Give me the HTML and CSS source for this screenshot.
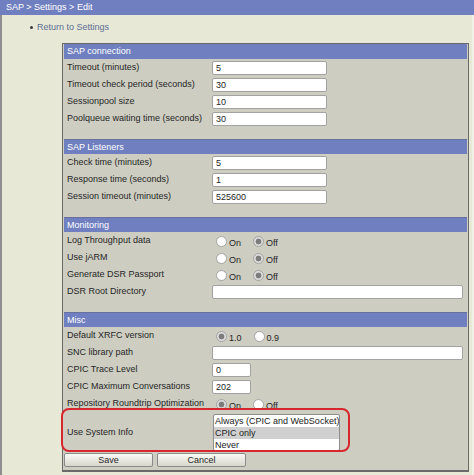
FILE: index.html
```html
<!DOCTYPE html>
<html lang="en">
<head>
<meta charset="utf-8">
<title>SAP &gt; Settings &gt; Edit</title>
<link rel="stylesheet" href="styles.css">
</head>
<body>
<div class="topbar">SAP &gt; Settings &gt; Edit</div>
<div class="page">
  <ul class="nav">
    <li><a href="#">Return to Settings</a></li>
  </ul>
  <form class="panel">
    <div class="sec">SAP connection</div>
    <div class="row"><span class="lbl">Timeout (minutes)</span><input class="txt" type="text" value="5"></div>
    <div class="row"><span class="lbl">Timeout check period (seconds)</span><input class="txt" type="text" value="30"></div>
    <div class="row"><span class="lbl">Sessionpool size</span><input class="txt" type="text" value="10"></div>
    <div class="row"><span class="lbl">Poolqueue waiting time (seconds)</span><input class="txt" type="text" value="30"></div>
    <div class="gap"></div>

    <div class="sec">SAP Listeners</div>
    <div class="row"><span class="lbl">Check time (minutes)</span><input class="txt" type="text" value="5"></div>
    <div class="row"><span class="lbl">Response time (seconds)</span><input class="txt" type="text" value="1"></div>
    <div class="row"><span class="lbl">Session timeout (minutes)</span><input class="txt" type="text" value="525600"></div>
    <div class="gap"></div>

    <div class="sec">Monitoring</div>
    <div class="row"><span class="lbl">Log Throughput data</span>
      <div class="radios"><label class="opt"><input type="radio" name="log"><span>On</span></label><label class="opt"><input type="radio" name="log" checked><span>Off</span></label></div></div>
    <div class="row"><span class="lbl">Use jARM</span>
      <div class="radios"><label class="opt"><input type="radio" name="jarm"><span>On</span></label><label class="opt"><input type="radio" name="jarm" checked><span>Off</span></label></div></div>
    <div class="row"><span class="lbl">Generate DSR Passport</span>
      <div class="radios"><label class="opt"><input type="radio" name="dsr"><span>On</span></label><label class="opt"><input type="radio" name="dsr" checked><span>Off</span></label></div></div>
    <div class="row"><span class="lbl">DSR Root Directory</span><input class="txt wide" type="text" value=""></div>
    <div class="gap"></div>

    <div class="sec">Misc</div>
    <div class="row"><span class="lbl">Default XRFC version</span>
      <div class="radios"><label class="opt"><input type="radio" name="xrfc" checked><span>1.0</span></label><label class="opt"><input type="radio" name="xrfc"><span>0.9</span></label></div></div>
    <div class="row"><span class="lbl">SNC library path</span><input class="txt wide" type="text" value=""></div>
    <div class="row"><span class="lbl">CPIC Trace Level</span><input class="txt small" type="text" value="0"></div>
    <div class="row"><span class="lbl">CPIC Maximum Conversations</span><input class="txt small" type="text" value="202"></div>
    <div class="row"><span class="lbl">Repository Roundtrip Optimization</span>
      <div class="radios"><label class="opt"><input type="radio" name="rro" checked><span>On</span></label><label class="opt"><input type="radio" name="rro"><span>Off</span></label></div></div>
    <div class="row tall"><span class="lbl">Use System Info</span>
      <div class="listbox" role="listbox">
        <div class="item" role="option">Always (CPIC and WebSocket)</div>
        <div class="item sel" role="option" aria-selected="true">CPIC only</div>
        <div class="item" role="option">Never</div>
      </div>
      <div class="mark"></div>
    </div>
    <div class="btns">
      <button type="button" class="btn">Save</button>
      <button type="button" class="btn">Cancel</button>
    </div>
  </form>
</div>
</body>
</html>
```
FILE: styles.css
```css
* { box-sizing: border-box; }
html, body { margin: 0; padding: 0; }
body {
  font-family: "Liberation Sans", Arial, sans-serif;
  font-size: 9px;
  color: #262626;
  background: #e8e8d7;
  height: 475px;
  overflow: hidden;
}
.topbar {
  height: 15px;
  line-height: 15px;
  background: #6f7fbf;
  color: #ffffff;
  padding-left: 6px;
}
.page {
  border-left: 2px solid #8e8e8e;
  border-right: 2px solid #f1f1e6;
  height: 460px;
}
.nav {
  list-style: none;
  margin: 0;
  padding: 7px 0 0 28px;
  line-height: 11px;
  height: 28px;
}
.nav li { display: flex; align-items: center; gap: 4px; }
.nav li::before {
  content: "";
  width: 3px;
  height: 3px;
  border-radius: 50%;
  background: #3a3a3a;
}
.nav a { color: #5a6f92; text-decoration: none; }
.panel {
  margin: 0 0 0 60px;
  width: 407px;
  background: #cdcdc1;
  border: 1px solid #6a6a6a;
  border-bottom-width: 2px;
  padding: 0 1px 2px 1px;
}
.sec {
  height: 15px;
  line-height: 15px;
  background: #6f7fbf;
  color: #ffffff;
  padding-left: 3px;
  border-top: 1px solid #66719f;
}
.sec:first-child { border-top: 0; }
.gap { height: 12px; }
.row {
  display: grid;
  grid-template-columns: 148px 1fr;
  align-items: center;
  height: 17px;
}
.lbl { padding-left: 3px; line-height: 17px; white-space: nowrap; }
.txt {
  margin: 1px 0 0 0;
  width: 115px;
  height: 14px;
  border: 1px solid #a2a2a2;
  border-radius: 2px;
  background: #ffffff;
  font: 9px "Liberation Sans", Arial, sans-serif;
  color: #262626;
  padding: 0 0 0 3px;
  outline: none;
}
.txt.wide { width: 251px; }
.txt.small { width: 39px; }
.radios { display: flex; align-items: center; margin-top: 2px; }
.opt { display: flex; align-items: center; margin-right: 8px; }
.opt input {
  -webkit-appearance: none;
  appearance: none;
  width: 11px;
  height: 11px;
  margin: 0 2px 0 4px;
  border: 1px solid #a4a4a4;
  border-radius: 50%;
  background: #ffffff;
}
.opt input:checked {
  background: radial-gradient(circle, #7c7c7c 0, #7c7c7c 2.6px, #dadada 3.2px, #e4e4e4 100%);
}
.opt span { padding-top: 2px; }
.row.tall { height: 40px; position: relative; }
.listbox {
  margin: 0 0 0 1px;
  width: 127px;
  height: 37px;
  border: 1px solid #8c8c8c;
  border-radius: 2px;
  background: #ffffff;
  overflow: hidden;
}
.item { height: 12px; line-height: 12px; padding-left: 1px; white-space: nowrap; color: #222; }
.item.sel { background: #d0d0d0; }
.mark {
  position: absolute;
  left: -3px;
  top: -4px;
  width: 289px;
  height: 44px;
  border: 2px solid #d8262e;
  border-radius: 8px;
  pointer-events: none;
}
.btns { display: flex; gap: 4px; padding-top: 1px; height: 16px; }
.btn {
  width: 89px;
  height: 14px;
  padding: 0;
  font: 9px "Liberation Sans", Arial, sans-serif;
  color: #262626;
  border: 1px solid #8a8a8a;
  border-radius: 2px;
  background: linear-gradient(#fbfbf6, #d6d6cc);
}
```
